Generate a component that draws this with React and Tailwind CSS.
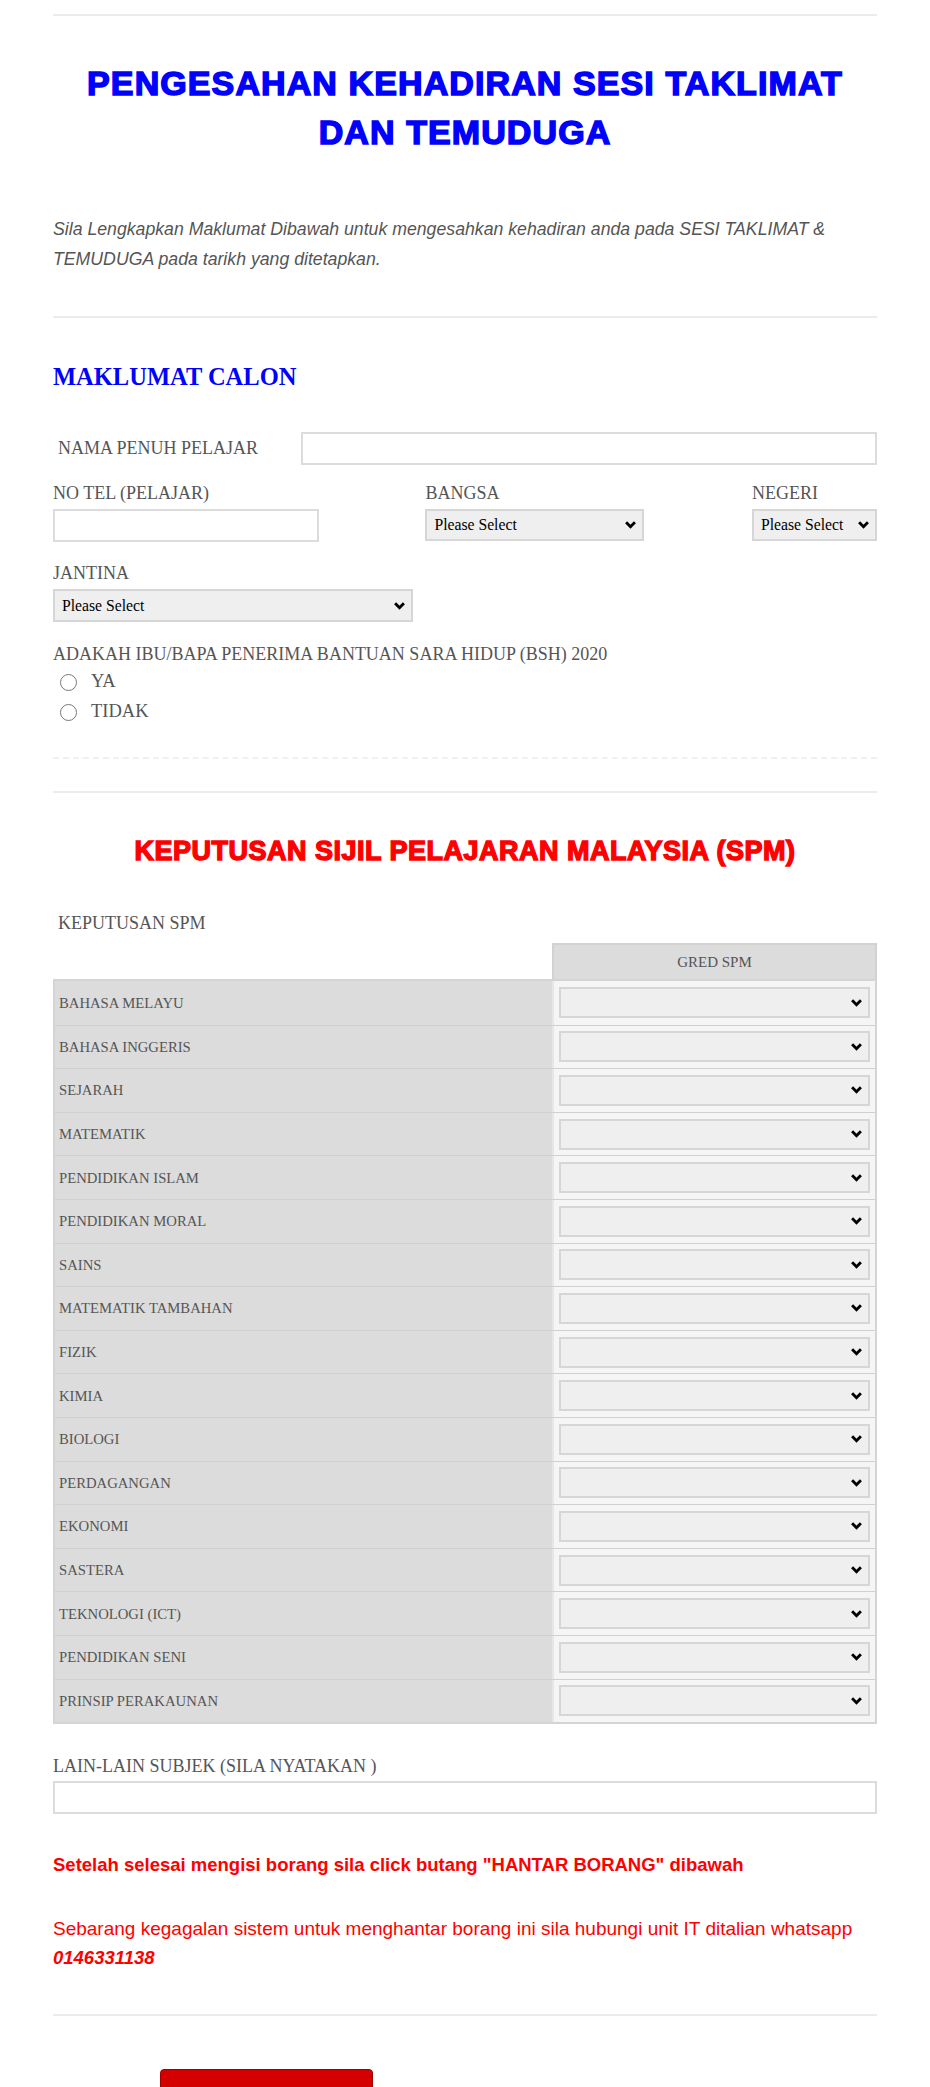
const subjects = [
  'BAHASA MELAYU',
  'BAHASA INGGERIS',
  'SEJARAH',
  'MATEMATIK',
  'PENDIDIKAN ISLAM',
  'PENDIDIKAN MORAL',
  'SAINS',
  'MATEMATIK TAMBAHAN',
  'FIZIK',
  'KIMIA',
  'BIOLOGI',
  'PERDAGANGAN',
  'EKONOMI',
  'SASTERA',
  'TEKNOLOGI (ICT)',
  'PENDIDIKAN SENI',
  'PRINSIP PERAKAUNAN',
];

const serif = "font-['Liberation_Serif',serif]";
const sans = "font-['Liberation_Sans',Arial,sans-serif]";

function Select({ className = '', label = 'Please Select' }) {
  return (
    <div
      className={`relative flex items-center bg-[#efefef] border-2 border-[#d6d6d6] text-[15.7px] text-black ${serif} ${className}`}
    >
      <span className="pl-[7px]">{label}</span>
      <svg
        viewBox="0 0 10 7"
        className="absolute right-[6px] top-1/2 -translate-y-1/2 w-[11px] h-[8px]"
        fill="none"
        stroke="black"
        strokeWidth="2.6"
      >
        <path d="M1 1l4 4 4-4" />
      </svg>
    </div>
  );
}

function Label({ children, className = '' }) {
  return <div className={`text-[18px] text-[#555] ${serif} ${className}`}>{children}</div>;
}

function Radio({ text }) {
  return (
    <div className="flex items-center h-[30px]">
      <span className="w-[17px] h-[17px] rounded-full border-[1.5px] border-[#777] ml-[7px] bg-white" />
      <span className={`ml-[14px] text-[18.5px] text-[#555] ${serif}`}>{text}</span>
    </div>
  );
}

export default function App() {
  return (
    <div className="bg-white w-[930px] min-h-[2087px] overflow-hidden">
      <div className="mx-[53px] pt-[14px]">
        <div className="h-[2px] bg-[#ececec]" />

        <h1
          className={`mt-[43px] text-center text-[34px] leading-[49px] tracking-[1.1px] font-bold text-[#0000ff] [-webkit-text-stroke:1.5px_#0000ff] ${sans}`}
        >
          PENGESAHAN KEHADIRAN SESI TAKLIMAT
          <br />
          DAN TEMUDUGA
        </h1>

        <p className={`mt-[57px] text-[17.7px] leading-[30px] italic text-[#555] ${sans}`}>
          Sila Lengkapkan Maklumat Dibawah untuk mengesahkan kehadiran anda pada SESI TAKLIMAT &amp; TEMUDUGA pada
          tarikh yang ditetapkan.
        </p>

        <div className="mt-[42px] h-[2px] bg-[#ececec]" />

        <h2 className={`mt-[44px] text-[24.5px] leading-[30px] font-bold text-[#0000ff] ${serif}`}>MAKLUMAT CALON</h2>

        <div className="mt-[40px] flex items-center">
          <Label className="w-[248px] pl-[5px]">NAMA PENUH PELAJAR</Label>
          <div className="flex-1 h-[33px] border-2 border-[#dcdcdc] bg-white" />
        </div>

        <div className="mt-[16px] flex">
          <div className="w-[374px]">
            <Label className="leading-[24px]">NO TEL (PELAJAR)</Label>
            <div className="mt-[4px] w-[266px] h-[33px] border-2 border-[#dcdcdc] bg-white" />
          </div>
          <div className="w-[328px]">
            <Label className="leading-[24px]">BANGSA</Label>
            <Select className="mt-[4px] w-[219px] h-[32px]" />
          </div>
          <div className="flex-1">
            <Label className="leading-[24px]">NEGERI</Label>
            <Select className="mt-[4px] w-[125px] h-[32px]" />
          </div>
        </div>

        <div className="mt-[19px]">
          <Label className="leading-[24px]">JANTINA</Label>
          <Select className="mt-[4px] w-[360px] h-[33px]" />
        </div>

        <div className="mt-[20px]">
          <Label className="leading-[24px]">ADAKAH IBU/BAPA PENERIMA BANTUAN SARA HIDUP (BSH) 2020</Label>
          <div className="mt-[1px]">
            <Radio text="YA" />
            <Radio text="TIDAK" />
          </div>
        </div>

        <div className="mt-[30px] border-t-2 border-dashed border-[#f0f0f0]" />
        <div className="mt-[32px] h-[2px] bg-[#ececec]" />

        <h2
          className={`mt-[43px] text-center text-[27px] leading-[30px] tracking-[0.5px] font-bold text-[#ff0000] [-webkit-text-stroke:1.4px_#ff0000] ${sans}`}
        >
          KEPUTUSAN SIJIL PELAJARAN MALAYSIA (SPM)
        </h2>

        <Label className="mt-[45px] pl-[5px] leading-[24px]">KEPUTUSAN SPM</Label>

        <div className="mt-[8px]">
          <div className="flex">
            <div className="w-[499px]" />
            <div
              className={`flex-1 h-[36px] flex items-center justify-center bg-[#dcdcdc] border-2 border-b-0 border-[#d2d2d2] text-[15px] text-[#555] ${serif}`}
            >
              GRED SPM
            </div>
          </div>
          <div className="border-2 border-[#d4d4d4]">
            {subjects.map((s, i) => (
              <div key={s} className={`flex h-[43.6px] ${i > 0 ? 'border-t border-[#d0d0d0]' : ''}`}>
                <div className={`w-[497px] bg-[#dcdcdc] flex items-center pl-[4px] text-[14.7px] text-[#555] ${serif}`}>
                  {s}
                </div>
                <div className="flex-1 bg-[#f5f5f5] border-l-2 border-[#e6e6e6] flex items-center px-[5px]">
                  <Select className="w-full h-[31px]" label="" />
                </div>
              </div>
            ))}
          </div>
        </div>

        <Label className="mt-[30px] leading-[24px]">LAIN-LAIN SUBJEK (SILA NYATAKAN )</Label>
        <div className="mt-[3px] h-[33px] border-2 border-[#dcdcdc] bg-white" />

        <p className={`mt-[38px] text-[18.5px] leading-[26px] font-bold text-[#ff0000] ${sans}`}>
          Setelah selesai mengisi borang sila click butang &quot;HANTAR BORANG&quot; dibawah
        </p>

        <p className={`mt-[36px] text-[19px] leading-[29px] text-[#ff0000] ${sans}`}>
          Sebarang kegagalan sistem untuk menghantar borang ini sila hubungi unit IT ditalian whatsapp
          <br />
          <span className="font-bold italic text-[18.5px]">0146331138</span>
        </p>

        <div className="mt-[42px] h-[2px] bg-[#ececec]" />

        <div className="mt-[53px] ml-[107px] w-[213px] h-[50px] bg-[#d40000] border border-[#a00000] rounded-t-[4px]" />
      </div>
    </div>
  );
}
